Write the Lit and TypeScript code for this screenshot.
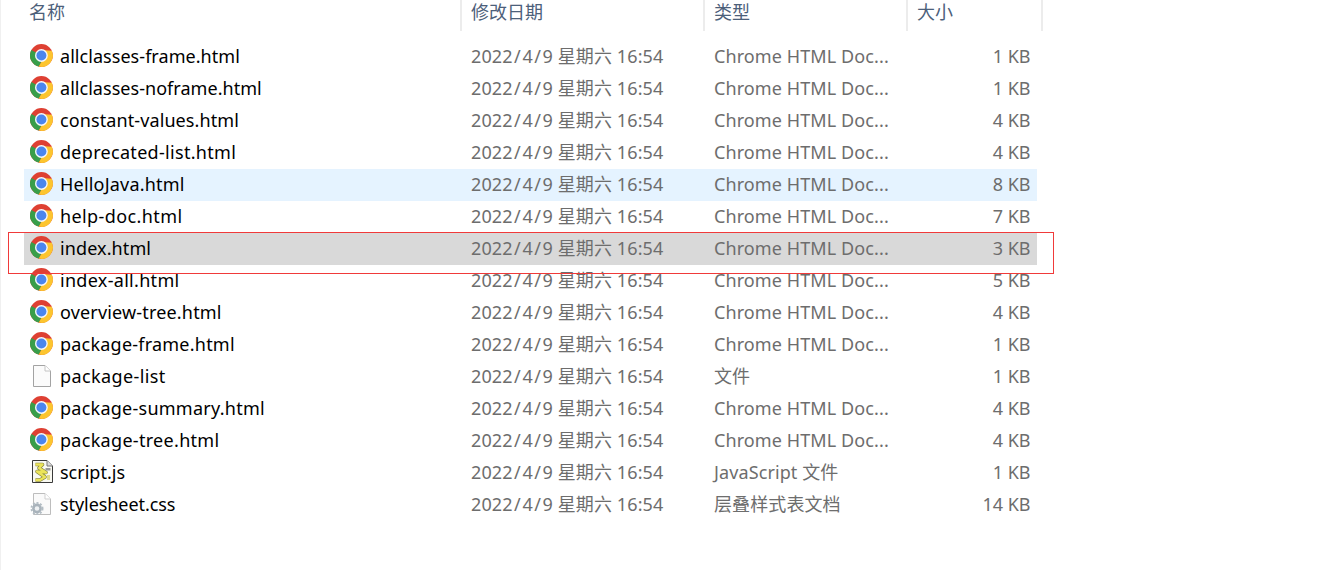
import { LitElement, html, css, svg } from "lit";
import { customElement } from "lit/decorators.js";

type Kind = "chrome" | "file" | "js" | "css";
interface Row { name: string; type: string; size: string; kind: Kind; track: number; cls?: string }

const CH = "Chrome HTML Doc...";
const rows: Row[] = [
  { name: "allclasses-frame.html", type: CH, size: "1 KB", kind: "chrome", track: 0.05 },
  { name: "allclasses-noframe.html", type: CH, size: "1 KB", kind: "chrome", track: 0.04 },
  { name: "constant-values.html", type: CH, size: "4 KB", kind: "chrome", track: 0.1 },
  { name: "deprecated-list.html", type: CH, size: "4 KB", kind: "chrome", track: 0.3 },
  { name: "HelloJava.html", type: CH, size: "8 KB", kind: "chrome", track: 0.2, cls: "hover" },
  { name: "help-doc.html", type: CH, size: "7 KB", kind: "chrome", track: 0.4 },
  { name: "index.html", type: CH, size: "3 KB", kind: "chrome", track: 0.1, cls: "sel" },
  { name: "index-all.html", type: CH, size: "5 KB", kind: "chrome", track: 0.3 },
  { name: "overview-tree.html", type: CH, size: "4 KB", kind: "chrome", track: 0.17 },
  { name: "package-frame.html", type: CH, size: "1 KB", kind: "chrome", track: 0.22 },
  { name: "package-list", type: "文件", size: "1 KB", kind: "file", track: 0.4 },
  { name: "package-summary.html", type: CH, size: "4 KB", kind: "chrome", track: 0.25 },
  { name: "package-tree.html", type: CH, size: "4 KB", kind: "chrome", track: 0.3 },
  { name: "script.js", type: "JavaScript 文件", size: "1 KB", kind: "js", track: 0 },
  { name: "stylesheet.css", type: "层叠样式表文档", size: "14 KB", kind: "css", track: -0.07 },
];

const chrome = svg`
  <g transform="translate(-.6 -.5)">
    <circle cx="12" cy="12" r="11.4" fill="#de4033"/>
    <path d="M12 12 L2 6.4 A11.4 11.4 0 0 0 9.4 23.1 L14.5 13.5 Z" fill="#389e4a"/>
    <path d="M12 6.6 L22.4 7.2 A11.4 11.4 0 0 1 9.4 23.1 L15 13 Z" fill="#fcc52f"/>
    <circle cx="12" cy="12" r="6.4" fill="#f6f8fb"/>
    <circle cx="12" cy="12" r="5" fill="#4a86ee"/>
  </g>`;
const file = svg`
  <path d="M3.5 1.5 H15 L20.5 7 V22.5 H3.5 Z" fill="#fbfbfb" stroke="#a3a3a3"/>
  <path d="M15 1.5 V7 H20.5" fill="#fff" stroke="#c4c4c4"/>`;
const js = svg`
  <path d="M2.5 .5 H17 L22.5 6 V22.5 H2.5 Z" fill="#f9f9f2" stroke="#3a3a3a"/>
  <path d="M17 .5 V6 H22.5" fill="#dcdcdc" stroke="#777"/>
  <path d="M5.5 4.5 H12.5 L9 8 L16 12.5 L7 11.5 L15 17 L10 20 H5.5" fill="none" stroke="#7f7f3c" stroke-width="3.6" stroke-linejoin="round"/>
  <path d="M5.5 4.5 H12.5 L9 8 L16 12.5 L7 11.5 L15 17 L10 20 H5.5" fill="none" stroke="#ebe45a" stroke-width="2.4" stroke-linejoin="round"/>
  <path d="M15.5 8 H20.5 V10.5 H15.5 Z" fill="#9a9a9a"/>
  <path d="M17 15 H20 V20 H17 Z" fill="#dfd98a"/>`;
const cssIcon = svg`
  <path d="M3.5 1.5 H15 L20.5 7 V22.5 H3.5 Z" fill="#fafafa" stroke="#bdbdbd"/>
  <path d="M15 1.5 V7 H20.5" fill="#fff" stroke="#cfcfcf"/>
  <circle cx="7" cy="16.5" r="3.6" fill="#eef1f3" stroke="#a9b3bb" stroke-width="2.6"/>
  <circle cx="7" cy="16.5" r="5.6" fill="none" stroke="#b3bdc4" stroke-width="1.8" stroke-dasharray="2 1.6"/>`;
const icons: Record<Kind, unknown> = { chrome, file, js, css: cssIcon };

@customElement("app-root")
export class AppRoot extends LitElement {
  static styles = css`
    :host {
      display: block;
      position: relative;
      height: 570px;
      overflow: hidden;
      background: #fff;
      border-left: 1px solid #f0f0f0;
      box-sizing: border-box;
      font-family: "Noto Sans", "Noto Sans CJK SC", sans-serif;
      font-size: 18px;
    }
    .head {
      display: grid;
      grid-template-columns: 436px 243px 203px 137px;
      margin-left: 23px;
      height: 31px;
      margin-bottom: 10px;
      color: #4c607a;
      line-height: 24px;
    }
    .head div { padding-left: 9px; border-left: 2px solid #ececec; box-sizing: border-box; }
    .head div:first-child { padding-left: 5px; border-left: none; }
    .head div:last-child { border-right: 2px solid #ececec; }
    .row {
      display: grid;
      grid-template-columns: 436px 243px 203px 131px;
      width: 1013px;
      margin-left: 23px;
      height: 32px;
      padding-bottom: 2px;
      box-sizing: border-box;
      line-height: 30px;
      color: #6d6d6d;
    }
    .row.hover { background: #e5f3ff; }
    .row.sel { background: #d9d9d9; }
    .name { display: flex; align-items: center; color: #000; padding-left: 6px; gap: 6px; white-space: nowrap; }
    .name svg { width: 24px; height: 24px; flex: none; }
    .cell { padding-left: 11px; white-space: nowrap; }
    .date { letter-spacing: 0.1px; }
    .type { letter-spacing: 0.1px; }
    .sl { padding: 0 1.5px; }
    .size { text-align: right; padding-right: 6.5px; }
    .mark {
      position: absolute;
      left: 7px;
      top: 232px;
      width: 1046px;
      height: 42px;
      box-sizing: border-box;
      border: 1px solid #f03a3a;
    }
  `;

  render() {
    return html`
      <div class="head"><div>名称</div><div>修改日期</div><div>类型</div><div>大小</div></div>
      ${rows.map(r => html`
        <div class="row ${r.cls ?? ""}">
          <div class="name"><svg viewBox="0 0 24 24">${icons[r.kind]}</svg><span style="letter-spacing:${r.track}px">${r.name}</span></div>
          <div class="cell date">2022<span class="sl">/</span>4<span class="sl">/</span>9 星期六 16:54</div>
          <div class="cell type">${r.type}</div>
          <div class="size">${r.size}</div>
        </div>`)}
      <div class="mark"></div>
    `;
  }
}
